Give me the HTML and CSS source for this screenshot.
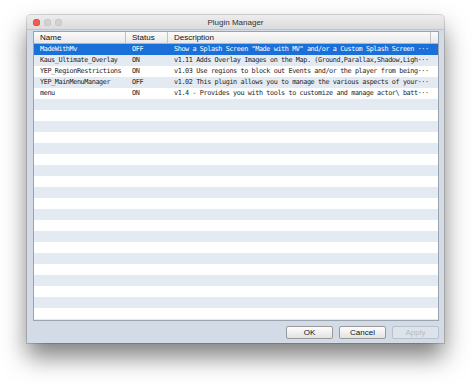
FILE: index.html
```html
<!DOCTYPE html>
<html lang="en">
<head>
    <meta charset="UTF-8">
    <title>Plugin Manager</title>
    <link rel="stylesheet" href="styles.css">
</head>
<body>

    <div class="window">
        <div class="titlebar">
            <div class="lights">
                <span class="light red"></span>
                <span class="light"></span>
                <span class="light"></span>
            </div>
            <span class="title">Plugin Manager</span>
        </div>

        <div class="content">
            <div class="table">
                <div class="header">
                    <div class="hcell">Name</div>
                    <div class="hcell">Status</div>
                    <div class="hcell">Description</div>
                    <div class="hcell corner"></div>
                </div>
                <div class="rows" id="rows">
                    <div class="row selected">
                        <span>MadeWithMv</span><span>OFF</span><span>Show a Splash Screen "Made with MV" and/or a Custom Splash Screen ···</span>
                    </div>
                    <div class="row">
                        <span>Kaus_Ultimate_Overlay</span><span>ON</span><span>v1.11 Adds Overlay Images on the Map. (Ground,Parallax,Shadow,Ligh···</span>
                    </div>
                    <div class="row">
                        <span>YEP_RegionRestrictions</span><span>ON</span><span>v1.03 Use regions to block out Events and/or the player from being···</span>
                    </div>
                    <div class="row">
                        <span>YEP_MainMenuManager</span><span>OFF</span><span>v1.02 This plugin allows you to manage the various aspects of your···</span>
                    </div>
                    <div class="row">
                        <span>menu</span><span>ON</span><span>v1.4 - Provides you with tools to customize and manage actor\ batt···</span>
                    </div>
                </div>
            </div>

            <div class="buttons">
                <button class="btn">OK</button>
                <button class="btn">Cancel</button>
                <button class="btn disabled">Apply</button>
            </div>
        </div>
    </div>

    <script>
        // fill the rest of the list with empty striped rows
        const rows = document.getElementById("rows");
        for (let i = 0; i < 22; i++) {
            const row = document.createElement("div");
            row.className = "row";
            rows.appendChild(row);
        }
    </script>

</body>
</html>
```

FILE: styles.css
```css
/* General Styles */
html {
    background: #ffffff;
}
body {
    margin: 0;
    padding: 15px 0 0 27px;
    min-height: 387px;
    box-sizing: border-box;
    background: #ffffff;
    font-family: 'Liberation Sans', Arial, sans-serif;
}

/* Window */
.window {
    width: 417px;
    height: 328px;
    background: #d3dce6;
    border-radius: 4px 4px 0 0;
    box-shadow: 0px 14px 24px rgba(0, 0, 0, 0.5), 0 0 0 1px rgba(0, 0, 0, 0.15);
    display: flex;
    flex-direction: column;
}

/* Title Bar */
.titlebar {
    height: 16px;
    position: relative;
    display: flex;
    align-items: center;
    justify-content: center;
    background: linear-gradient(#ededed, #dcdcdc);
    border-bottom: 1px solid #c4c4c4;
    border-radius: 4px 4px 0 0;
}
.lights {
    position: absolute;
    left: 6px;
    top: 4px;
    display: flex;
    gap: 4px;
}
.light {
    width: 7px;
    height: 7px;
    border-radius: 50%;
    background: #d2d2d2;
    box-shadow: inset 0 0 0 0.5px #bdbdbd;
}
.light.red {
    background: #f25a52;
    box-shadow: inset 0 0 0 0.5px #d9423b;
}
.title {
    font-size: 8px;
    color: #333;
}

/* Content */
.content {
    flex: 1;
    display: flex;
    flex-direction: column;
    padding: 1px 5px 4px 6px;
}

/* Table */
.table {
    height: 288px;
    background: #e2e8ef;
    border: 1px solid #9aa4ae;
    display: flex;
    flex-direction: column;
    overflow: hidden;
}
.header {
    display: grid;
    grid-template-columns: 92px 42px 263px 1fr;
    height: 11px;
    background: linear-gradient(#fbfbfb, #e9e9e9);
    border-bottom: 1px solid #b4b4b4;
}
.hcell {
    font-size: 8px;
    line-height: 11px;
    color: #111;
    padding-left: 6px;
    border-right: 1px solid #c2c2c2;
}
.hcell.corner {
    border-right: none;
    padding: 0;
}
.rows {
    flex: 1;
    overflow: hidden;
}
.row {
    display: grid;
    grid-template-columns: 92px 42px 1fr;
    height: 11px;
    background: #ffffff;
    font-family: 'DejaVu Sans Mono', 'Liberation Mono', monospace;
    font-size: 6.8px;
    letter-spacing: -0.4px;
    line-height: 11px;
    color: #1e1e1e;
    white-space: nowrap;
}
.row:nth-child(even) {
    background: #e4eaf2;
}
.row span {
    padding-left: 6px;
    overflow: hidden;
}
.row.selected {
    background: #1b6fd8;
    color: #ffffff;
}

/* Buttons */
.buttons {
    display: flex;
    justify-content: flex-end;
    gap: 6px;
    margin-top: 5px;
}
.btn {
    width: 47px;
    height: 13px;
    padding: 0;
    font-family: 'Liberation Sans', Arial, sans-serif;
    font-size: 8px;
    color: #111;
    background: linear-gradient(#fdfdfd, #e2e2e2);
    border: 1px solid #9a9a9a;
    border-radius: 2px;
}
.btn.disabled {
    color: #b5bcc4;
    background: #dde3ea;
    border-color: #b8c0c9;
}
```
